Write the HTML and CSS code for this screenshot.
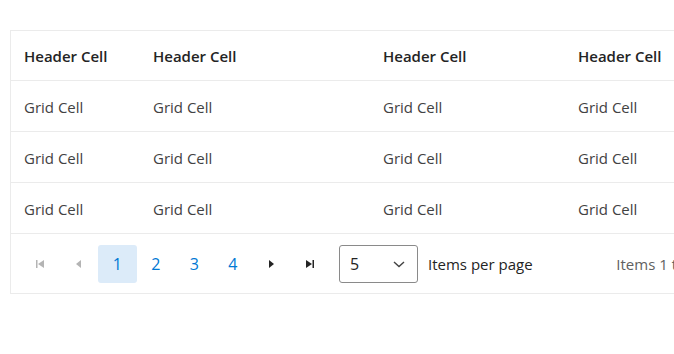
FILE: index.html
```html
<!DOCTYPE html>
<html lang="en">
<head>
    <meta charset="UTF-8">
    <meta name="viewport" content="width=device-width, initial-scale=1.0">
    <title>Grid</title>
    <link rel="stylesheet" href="styles.css">
</head>
<body>
    <div class="grid">
        <table class="grid-table">
            <colgroup>
                <col class="col-1">
                <col class="col-2">
                <col class="col-3">
                <col class="col-4">
            </colgroup>
            <thead>
                <tr>
                    <th>Header Cell</th>
                    <th>Header Cell</th>
                    <th>Header Cell</th>
                    <th>Header Cell</th>
                </tr>
            </thead>
            <tbody>
                <tr>
                    <td>Grid Cell</td>
                    <td>Grid Cell</td>
                    <td>Grid Cell</td>
                    <td>Grid Cell</td>
                </tr>
                <tr>
                    <td>Grid Cell</td>
                    <td>Grid Cell</td>
                    <td>Grid Cell</td>
                    <td>Grid Cell</td>
                </tr>
                <tr>
                    <td>Grid Cell</td>
                    <td>Grid Cell</td>
                    <td>Grid Cell</td>
                    <td>Grid Cell</td>
                </tr>
            </tbody>
        </table>

        <!-- Pager -->
        <div class="pager">
            <div class="pager-nav">
                <button class="pager-btn disabled" aria-label="First page">
                    <svg width="8" height="8" viewBox="0 0 8 8"><rect x="0" y="0" width="1.5" height="8"/><path d="M8 0 L2 4 L8 8 Z"/></svg>
                </button>
                <button class="pager-btn disabled" aria-label="Previous page">
                    <svg width="8" height="8" viewBox="0 0 8 8"><path d="M6 0 L1 4 L6 8 Z"/></svg>
                </button>
                <button class="pager-btn page selected">1</button>
                <button class="pager-btn page">2</button>
                <button class="pager-btn page">3</button>
                <button class="pager-btn page">4</button>
                <button class="pager-btn" aria-label="Next page">
                    <svg width="8" height="8" viewBox="0 0 8 8"><path d="M2 0 L7 4 L2 8 Z"/></svg>
                </button>
                <button class="pager-btn" aria-label="Last page">
                    <svg width="8" height="8" viewBox="0 0 8 8"><path d="M0 0 L6 4 L0 8 Z"/><rect x="6.5" y="0" width="1.5" height="8"/></svg>
                </button>
            </div>
            <div class="page-size">
                <div class="dropdown">
                    <span class="dropdown-value">5</span>
                    <svg class="chevron" width="12" height="7" viewBox="0 0 12 7"><path d="M1 1 L6 5.5 L11 1" fill="none" stroke="#424242" stroke-width="1.4"/></svg>
                </div>
                <span class="page-size-label">Items per page</span>
            </div>
            <div class="pager-info">Items 1 to 5 of 20 items</div>
        </div>
    </div>
</body>
</html>
```

FILE: styles.css
```css
body {
    margin: 0;
    padding: 30px 0 0 10px;
    background-color: #fff;
    font-family: 'Open Sans', 'Noto Sans', sans-serif;
    font-size: 15px;
    color: #424242;
    overflow: hidden;
}

.grid {
    width: 778px;
    border: 1px solid #ebebeb;
}

.grid-table {
    width: 100%;
    border-collapse: collapse;
    table-layout: fixed;
}

.col-1 { width: 129px; }
.col-2 { width: 230px; }
.col-3 { width: 195px; }

th,
td {
    text-align: left;
    line-height: 20px;
    padding: 16px 12px 14px 13px;
    white-space: nowrap;
    overflow: hidden;
    border-bottom: 1px solid #ebebeb;
}

th {
    padding-top: 15px;
    font-weight: 600;
    color: #242424;
}

.pager {
    display: flex;
    align-items: center;
    padding: 11px 9px 10px 10px;
}

.pager-nav {
    display: flex;
}

.pager-btn {
    width: 38.5px;
    height: 38px;
    padding: 0;
    border: none;
    border-radius: 3px;
    background: transparent;
    font-family: inherit;
    font-size: 16px;
    color: #242424;
    display: flex;
    align-items: center;
    justify-content: center;
    cursor: pointer;
}

.pager-btn svg {
    fill: #242424;
}

.pager-btn.disabled svg {
    fill: #b4b4b4;
}

.pager-btn.page {
    color: #0078d4;
}

.pager-btn.selected {
    background-color: #dcebf9;
}

.page-size {
    display: flex;
    align-items: center;
    margin-left: 10px;
}

.dropdown {
    box-sizing: border-box;
    width: 79px;
    height: 38px;
    border: 1px solid #8a8a8a;
    border-radius: 3px;
    display: flex;
    align-items: center;
    justify-content: space-between;
    padding: 0 12px 0 10px;
    color: #242424;
    font-size: 16px;
}

.chevron {
    display: block;
}

.page-size-label {
    margin-left: 10px;
    color: #242424;
}

.pager-info {
    margin-left: auto;
    color: #616161;
}
```
